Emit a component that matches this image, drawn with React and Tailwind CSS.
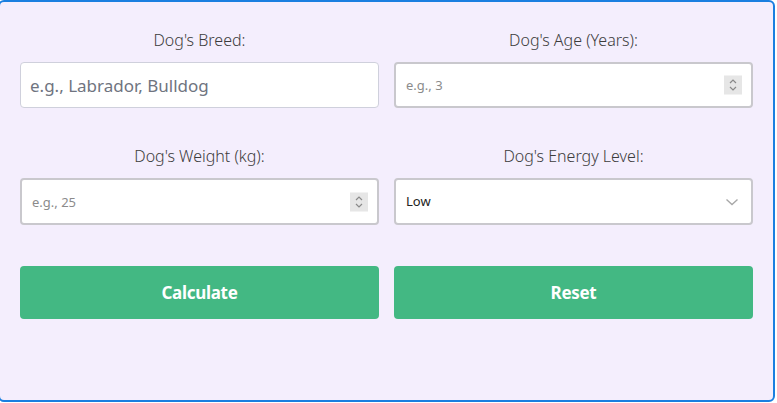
import React from "react";

const font = { fontFamily: '"Noto Sans", "Open Sans", sans-serif' };

function Spinner() {
  return (
    <div className="absolute right-[11px] top-1/2 -translate-y-1/2 w-[18px] h-[19px] bg-[#e6e6e6] flex items-center justify-center">
      <svg width="10" height="15" viewBox="0 0 10 15" fill="none" stroke="#8a8a8a" strokeWidth="1.2">
        <path d="M2 5.5 L5 2.5 L8 5.5" />
        <path d="M2 9.5 L5 12.5 L8 9.5" />
      </svg>
    </div>
  );
}

function Label({ children }) {
  return (
    <div className="text-center text-[16px] leading-[24px] font-light text-[#3c3c3c] mb-[10px]">{children}</div>
  );
}

export default function App() {
  return (
    <div className="w-[777px] h-[403px] bg-white overflow-hidden" style={font}>
      <div className="w-[777px] h-[402px] -ml-[2px] border-2 border-[#1a7fe0] rounded-[6px] bg-[#f4eefd] px-[20px] pt-[26px]">
        <div className="grid grid-cols-2 gap-x-[15px]">
          <div>
            <Label>Dog's Breed:</Label>
            <input
              className="w-full h-[46px] rounded-[4px] border border-[#cfd0dc] bg-white px-[9px] text-[17px] placeholder:text-[#6f7480] outline-none"
              placeholder="e.g., Labrador, Bulldog"
            />
          </div>
          <div>
            <Label>Dog's Age (Years):</Label>
            <div className="relative">
              <input
                className="w-full h-[46px] rounded-[4px] border-2 border-[#c9c8cd] bg-white px-[10px] text-[13px] placeholder:text-[#8b8b8b] outline-none"
                placeholder="e.g., 3"
              />
              <Spinner />
            </div>
          </div>
          <div className="mt-[36px]">
            <Label>Dog's Weight (kg):</Label>
            <div className="relative">
              <input
                className="w-full h-[47px] rounded-[4px] border-2 border-[#c9c8cd] bg-white px-[10px] text-[13px] placeholder:text-[#8b8b8b] outline-none"
                placeholder="e.g., 25"
              />
              <Spinner />
            </div>
          </div>
          <div className="mt-[36px]">
            <Label>Dog's Energy Level:</Label>
            <div className="relative">
              <div className="w-full h-[47px] rounded-[4px] border-2 border-[#c9c8cd] bg-white px-[10px] text-[13px] text-[#222] flex items-center">
                Low
              </div>
              <svg className="absolute right-[14px] top-1/2 -translate-y-1/2" width="14" height="9" viewBox="0 0 14 9" fill="none" stroke="#a8a8a8" strokeWidth="1.4">
                <path d="M1.5 2 L7 7 L12.5 2" />
              </svg>
            </div>
          </div>
          <button className="mt-[41px] h-[53px] rounded-[4px] bg-[#43b883] text-white font-bold text-[17px] tracking-[-0.3px]">
            Calculate
          </button>
          <button className="mt-[41px] h-[53px] rounded-[4px] bg-[#43b883] text-white font-bold text-[17px] tracking-[-0.3px]">
            Reset
          </button>
        </div>
      </div>
    </div>
  );
}
